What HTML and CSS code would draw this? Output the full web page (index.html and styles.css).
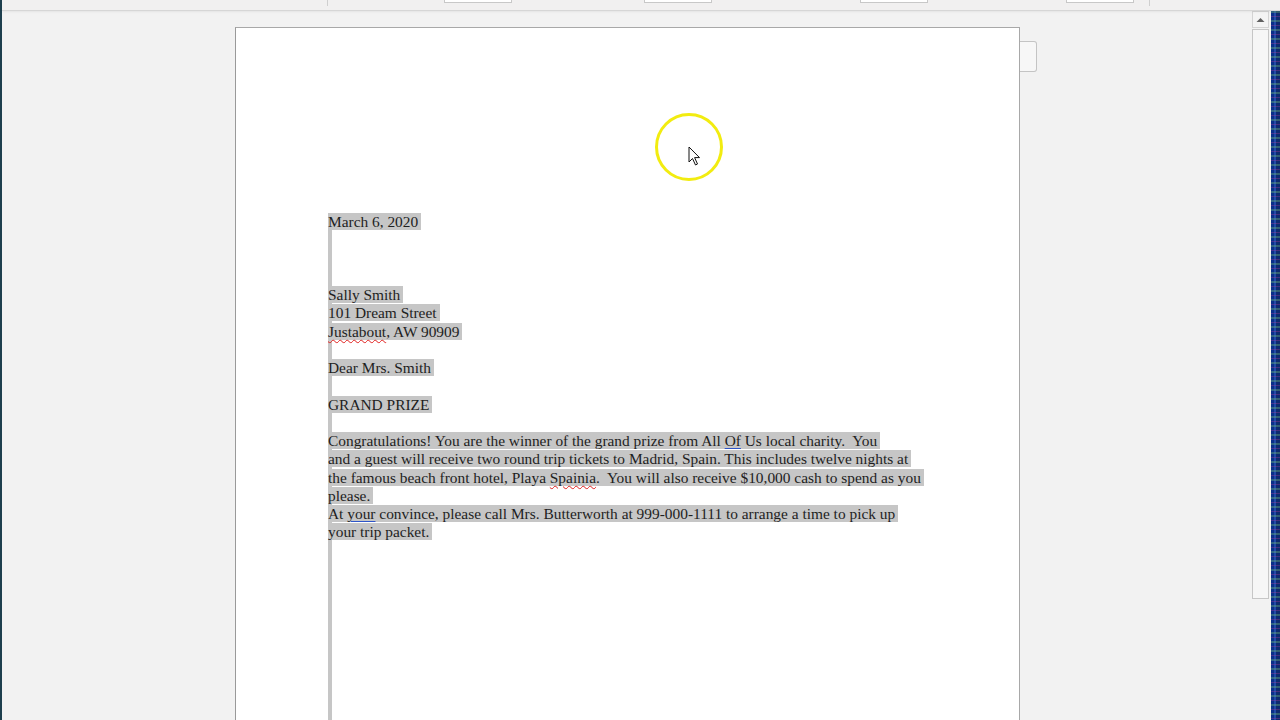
FILE: index.html
```html
<!DOCTYPE html>
<html>
<head>
<meta charset="utf-8">
<link rel="stylesheet" href="styles.css">
</head>
<body>
<div class="app">
  <div class="ribbon">
    <div class="rib-sep rib-sep-a"></div>
    <div class="rib-box rib-b1"></div>
    <div class="rib-box rib-b2"></div>
    <div class="rib-box rib-b3"></div>
    <div class="rib-box rib-b4"></div>
    <div class="rib-sep rib-sep-b"></div>
  </div>
  <div class="workspace">
    <div class="canvas">
      <div class="page">
        <div class="text">
          <div class="line"><span class="sel">March 6, 2020</span></div>
          <div class="line"></div>
          <div class="line"></div>
          <div class="line"></div>
          <div class="line"><span class="sel">Sally Smith</span></div>
          <div class="line"><span class="sel">101 Dream Street</span></div>
          <div class="line"><span class="sel"><span class="spell">Justabout</span>, AW 90909</span></div>
          <div class="line"></div>
          <div class="line"><span class="sel">Dear Mrs. Smith</span></div>
          <div class="line"></div>
          <div class="line"><span class="sel">GRAND PRIZE</span></div>
          <div class="line"></div>
          <div class="line"><span class="sel">Congratulations! You are the winner of the grand prize from All <span class="gram">Of</span> Us local charity.&nbsp; You</span></div>
          <div class="line"><span class="sel">and a guest will receive two round trip tickets to Madrid, Spain. This includes twelve nights at</span></div>
          <div class="line"><span class="sel">the famous beach front hotel, Playa <span class="spell">Spainia</span>.&nbsp; You will also receive $10,000 cash to spend as you</span></div>
          <div class="line"><span class="sel">please.</span></div>
          <div class="line"><span class="sel">At <span class="gram">your</span> convince, please call Mrs. Butterworth at 999-000-1111 to arrange a time to pick up</span></div>
          <div class="line"><span class="sel">your trip packet.</span></div>
        </div>
        <div class="ring"></div>
        <svg class="pointer" width="14" height="20" viewBox="0 0 14 20">
          <path d="M1 1 L1 16 L4.5 12.5 L7.5 19 L9.5 18 L6.6 11.6 L11.5 11.6 Z" fill="#ffffff" stroke="#111111" stroke-width="1" stroke-linejoin="miter"/>
        </svg>
      </div>
      <div class="side-tab"></div>
    </div>
    <div class="scrollbar">
      <div class="sb-up">
        <svg width="9" height="6" viewBox="0 0 9 6"><path d="M0.5 5 L4.5 1 L8.5 5 Z" fill="#606060"/></svg>
      </div>
      <div class="sb-thumb"></div>
    </div>
    <div class="edge"></div>
  </div>
</div>
</body>
</html>
```

FILE: styles.css
```css
html, body {
  margin: 0;
  padding: 0;
  width: 1280px;
  height: 720px;
  overflow: hidden;
  background: #f2f2f2;
}

.app {
  display: flex;
  flex-direction: column;
  width: 1280px;
  height: 720px;
  border-left: 2px solid #1e3f4e;
  box-sizing: border-box;
}

.ribbon {
  position: relative;
  height: 10px;
  flex: none;
  background: #f1f0f0;
  border-bottom: 1px solid #d6d6d6;
  box-shadow: 0 1px 2px rgba(0,0,0,0.06);
}

.rib-box {
  position: absolute;
  top: 0;
  width: 66px;
  height: 2px;
  background: #ffffff;
  border: 1px solid #c8c8c8;
  border-top: none;
}
.rib-b1 { left: 442px; }
.rib-b2 { left: 642px; }
.rib-b3 { left: 858px; }
.rib-b4 { left: 1064px; }

.rib-sep {
  position: absolute;
  top: 0;
  width: 1px;
  height: 6px;
  background: #cfcfcf;
}
.rib-sep-a { left: 325px; }
.rib-sep-b { left: 1147px; }

.workspace {
  flex: 1;
  display: flex;
  min-height: 0;
}

.canvas {
  flex: 1;
  display: flex;
  align-items: flex-start;
  padding-top: 16px;
  padding-left: 233px;
  overflow: hidden;
}

.page {
  position: relative;
  width: 783px;
  height: 720px;
  flex: none;
  background: #ffffff;
  border-left: 1px solid #9a9a9a;
  border-top: 1px solid #a8a8a8;
  border-right: 1px solid #a8a8a8;
}

.side-tab {
  flex: none;
  width: 16px;
  height: 29px;
  margin-top: 14px;
  background: #f7f7f7;
  border: 1px solid #c4c4c4;
  border-left: none;
  border-radius: 0 3px 3px 0;
}

.text {
  margin-left: 92px;
  padding-top: 185px;
  height: 600px;
  font-family: "Liberation Serif", "Times New Roman", serif;
  font-size: 15.4px;
  color: #1e1e1e;
  background: linear-gradient(#c6c6c6, #c6c6c6) no-repeat 0 194px / 4px 100%;
}

.line {
  height: 18.25px;
  line-height: 18.25px;
  white-space: nowrap;
}

.sel {
  background: #c6c6c6;
  padding-right: 3px;
}

.spell {
  text-decoration: underline wavy #e0201e;
  text-decoration-thickness: 1px;
  text-underline-offset: 2px;
}

.gram {
  text-decoration: underline double #2f55c8;
  text-decoration-thickness: 1px;
  text-underline-offset: 2px;
}

.ring {
  position: absolute;
  left: 419px;
  top: 85px;
  width: 62px;
  height: 62px;
  border: 3px solid #f2ec10;
  border-radius: 50%;
  box-sizing: content-box;
}

.pointer {
  position: absolute;
  left: 452px;
  top: 118px;
}

.scrollbar {
  flex: none;
  width: 17px;
  margin-right: 2px;
  display: flex;
  flex-direction: column;
}

.sb-up {
  height: 15px;
  border: 1px solid #d4d4d4;
  background: #f4f4f4;
  display: flex;
  align-items: center;
  justify-content: center;
  box-sizing: content-box;
}

.sb-thumb {
  height: 568px;
  margin-top: 1px;
  background: #f6f6f6;
  border: 1px solid #c6c6c6;
}

.edge {
  flex: none;
  width: 9px;
  background:
    repeating-linear-gradient(180deg, rgba(120,200,120,0.35) 0 2px, transparent 2px 5px, rgba(200,60,160,0.3) 5px 6px, transparent 6px 9px),
    repeating-linear-gradient(90deg, #0b2f8a 0 3px, #234aa8 3px 5px, #0f2a70 5px 9px);
}
```
